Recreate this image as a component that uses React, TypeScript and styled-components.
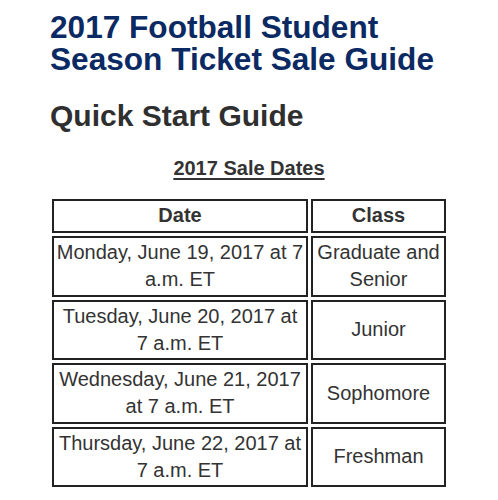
import React from "react";
import styled, { createGlobalStyle } from "styled-components";

const Global = createGlobalStyle`
  html, body { margin: 0; padding: 0; background: #ffffff; }
  body { font-family: "Liberation Sans", Arial, Helvetica, sans-serif; }
`;

const Page = styled.div`
  width: 498px;
  padding-top: 11px;
  box-sizing: border-box;
`;

const Title = styled.h1`
  margin: 0 0 0 50px;
  font-size: 31.6px;
  line-height: 32px;
  font-weight: 700;
  color: #0b2a63;
`;

const Subtitle = styled.h2`
  margin: 25px 0 0 50px;
  font-size: 30px;
  line-height: 32px;
  font-weight: 700;
  color: #2f2f2f;
`;

const SectionHeading = styled.h3`
  margin: 23px 0 0 0;
  text-align: center;
  font-size: 20px;
  line-height: 27px;
  font-weight: 700;
  color: #333333;
  text-decoration: underline;
  text-underline-offset: 3px;
`;

const Table = styled.div`
  margin: 17px 0 0 52px;
  display: grid;
  grid-template-columns: 256px 135px;
  gap: 3px;
`;

const Cell = styled.div<{ $head?: boolean }>`
  box-sizing: border-box;
  border: 2px solid #222222;
  padding: ${(p) => (p.$head ? "1px 2px 2px" : "1px 2px 1.5px")};
  display: flex;
  align-items: center;
  justify-content: center;
  text-align: center;
  font-size: 20px;
  line-height: 27px;
  font-weight: ${(p) => (p.$head ? 700 : 400)};
  color: #333333;
`;

const rows: [string, string][] = [
  ["Monday, June 19, 2017 at 7 a.m. ET", "Graduate and Senior"],
  ["Tuesday, June 20, 2017 at 7 a.m. ET", "Junior"],
  ["Wednesday, June 21, 2017 at 7 a.m. ET", "Sophomore"],
  ["Thursday, June 22, 2017 at 7 a.m. ET", "Freshman"],
];

export default function App() {
  return (
    <Page>
      <Global />
      <Title>
        2017 Football Student
        <br />
        Season Ticket Sale Guide
      </Title>
      <Subtitle>Quick Start Guide</Subtitle>
      <SectionHeading>2017 Sale Dates</SectionHeading>
      <Table>
        <Cell $head>Date</Cell>
        <Cell $head>Class</Cell>
        {rows.map(([d, c]) => (
          <React.Fragment key={d}>
            <Cell>{d}</Cell>
            <Cell>{c}</Cell>
          </React.Fragment>
        ))}
      </Table>
    </Page>
  );
}
